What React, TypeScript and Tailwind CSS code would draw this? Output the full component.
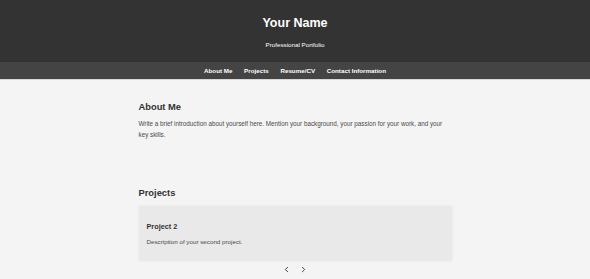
import { ChevronLeft, ChevronRight } from "lucide-react";

const font = { fontFamily: '"Liberation Sans", Arial, sans-serif' };

export default function App() {
    return (
        <div className="min-h-screen bg-[#f4f4f4] text-[#333]" style={font}>
            {/* Header */}
            <header className="bg-[#333333] h-[62px] flex flex-col items-center text-white">
                <h1 className="text-[12.5px] font-bold leading-none mt-[17px]">Your Name</h1>
                <p className="text-[6.24px] leading-none mt-[12px]">Professional Portfolio</p>
            </header>

            {/* Nav */}
            <nav className="bg-[#444444] h-[18px] flex items-center justify-center gap-[11.7px] border-b border-[#d8d8d8]">
                {["About Me", "Projects", "Resume/CV", "Contact Information"].map((item) => (
                    <a key={item} className="text-white text-[6.24px] font-bold leading-none pt-[1px]">
                        {item}
                    </a>
                ))}
            </nav>

            <main className="w-[313px] mx-auto">
                {/* About */}
                <section className="pt-[23px]">
                    <h2 className="text-[9.36px] font-bold leading-none">About Me</h2>
                    <p className="text-[6.3px] text-[#4a4a4a] leading-[10.2px] mt-[7px] pr-[8px]">
                        Write a brief introduction about yourself here. Mention your background, your passion for your work, and your key skills.
                    </p>
                </section>

                {/* Projects */}
                <section className="pt-[49px]">
                    <h2 className="text-[9.36px] font-bold leading-none">Projects</h2>
                    <div className="mt-[8px] bg-[#e9e9e9] h-[55px] px-[8px] pt-[17px] shadow-[0_0_3px_rgba(0,0,0,0.06)]">
                        <h3 className="text-[7.3px] font-bold leading-none">Project 2</h3>
                        <p className="text-[6.24px] text-[#4a4a4a] leading-none mt-[9px]">Description of your second project.</p>
                    </div>
                    <div className="flex justify-center gap-[8px] mt-[4px] text-[#222]">
                        <ChevronLeft size={9} strokeWidth={2.2} />
                        <ChevronRight size={9} strokeWidth={2.2} />
                    </div>
                </section>
            </main>
        </div>
    );
}
